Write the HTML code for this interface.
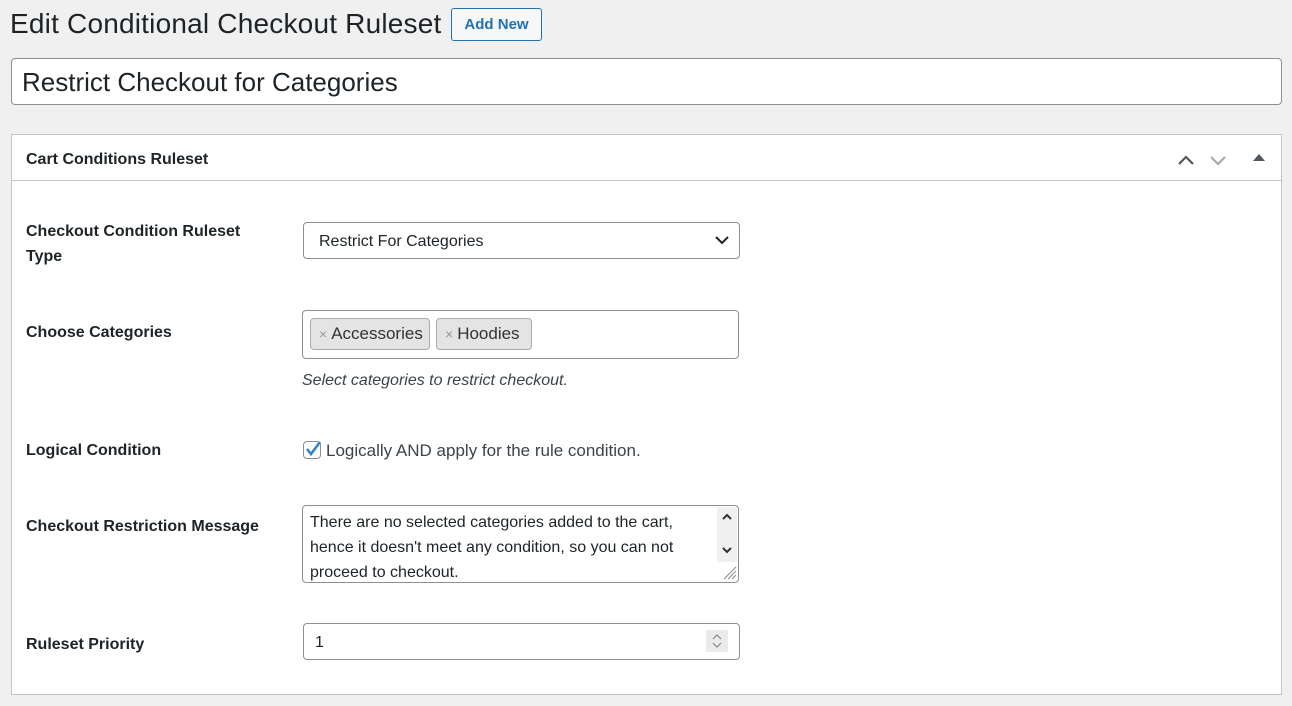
<!DOCTYPE html>
<html><head><style>
body{margin:0;background:#f0f0f1;font-family:"Liberation Sans",sans-serif;color:#1d2327;width:1292px;height:706px;overflow:hidden;position:relative}
.a{position:absolute}
.lbl{position:absolute;left:26px;font-size:16px;font-weight:bold;line-height:25px;color:#1d2327}
.box{position:absolute;background:#fff;border:1px solid #8c8f94;border-radius:4px;box-sizing:border-box}
.tag{position:absolute;top:7px;height:32px;background:#e4e4e4;border:1px solid #aaa;border-radius:4px;box-sizing:border-box;font-size:17px;line-height:30px;padding:0 8px 0 8px;color:#333}
.tag b{color:#999;font-weight:normal;font-size:14px;margin-right:4px}
</style></head><body>
<div class="a" style="left:10px;top:6px;font-size:28px;line-height:36px;color:#1d2327;letter-spacing:0.2px">Edit Conditional Checkout Ruleset</div>
<div class="a" style="left:451px;top:8px;width:91px;height:33px;border:1px solid #2271b1;border-radius:3px;box-sizing:border-box;color:#2271b1;font-size:15px;font-weight:bold;line-height:31px;text-align:center;background:#f6f7f7">Add New</div>
<div class="box" style="left:11px;top:58px;width:1271px;height:47px;font-size:26px;line-height:47px;padding-left:10px">Restrict Checkout for Categories</div>
<div class="a" style="left:11px;top:134px;width:1271px;height:561px;background:#fff;border:1px solid #c3c4c7;box-sizing:border-box"></div>
<div class="a" style="left:12px;top:180px;width:1269px;height:1px;background:#c3c4c7"></div>
<div class="a" style="left:26px;top:147px;font-size:16px;font-weight:bold;line-height:25px">Cart Conditions Ruleset</div>
<svg class="a" style="left:1170px;top:145px" width="110" height="28"><path d="M9 19l7-7 7 7" stroke="#50575e" stroke-width="2.2" fill="none"/><path d="M41 12l7 7 7-7" stroke="#a7aaad" stroke-width="2.2" fill="none"/><path d="M83 16l6-7 6 7z" fill="#50575e"/></svg>
<div class="lbl" style="top:219px">Checkout Condition Ruleset<br>Type</div>
<div class="box" style="left:303px;top:222px;width:437px;height:37px;font-size:16px;line-height:37px;padding-left:15px">Restrict For Categories</div>
<svg class="a" style="left:714px;top:233px" width="16" height="14"><path d="M2 4l6 6 6-6" stroke="#1d2327" stroke-width="2" fill="none"/></svg>
<div class="lbl" style="top:320px">Choose Categories</div>
<div class="box" style="left:302px;top:310px;width:437px;height:49px">
<div class="tag" style="left:7px;width:120px"><b>×</b>Accessories</div>
<div class="tag" style="left:133px;width:96px"><b>×</b>Hoodies</div></div>
<div class="a" style="left:302px;top:368px;font-size:16px;font-style:italic;line-height:25px;color:#3c434a">Select categories to restrict checkout.</div>
<div class="lbl" style="top:438px">Logical Condition</div>
<div class="a" style="left:303px;top:441px;width:18px;height:18px;border:1px solid #8c8f94;border-radius:4px;box-sizing:border-box"></div>
<svg class="a" style="left:302px;top:438px" width="22" height="22"><path d="M5 11l4 5 9-12" stroke="#3582c4" stroke-width="2.6" fill="none"/></svg>
<div class="a" style="left:326px;top:438px;font-size:17px;line-height:25px;color:#3c434a">Logically AND apply for the rule condition.</div>
<div class="lbl" style="top:514px">Checkout Restriction Message</div>
<div class="box" style="left:302px;top:505px;width:437px;height:78px;font-size:16px;line-height:25px;padding:4px 7px;overflow:hidden;white-space:nowrap">There are no selected categories added to the cart,<br>hence it doesn't meet any condition, so you can not<br>proceed to checkout.</div>
<div class="a" style="left:717px;top:507px;width:20px;height:55px;background:#f0f0f0"></div>
<svg class="a" style="left:717px;top:507px" width="21" height="75"><path d="M6 12l4-4 4 4M6 41l4 4 4-4" stroke="#333" stroke-width="2" fill="none"/><path d="M19 60l-12 12M19 64l-8 8M19 68l-4 4" stroke="#888" stroke-width="1"/></svg>
<div class="lbl" style="top:632px">Ruleset Priority</div>
<div class="box" style="left:303px;top:623px;width:437px;height:37px;font-size:16px;line-height:37px;padding-left:11px">1</div>
<div class="a" style="left:706px;top:630px;width:22px;height:22px;background:#ebebeb"></div>
<svg class="a" style="left:706px;top:630px" width="22" height="22"><path d="M7 9l4-4 4 4M7 13l4 4 4-4" stroke="#888" stroke-width="1.2" fill="none"/></svg>
</body></html>
